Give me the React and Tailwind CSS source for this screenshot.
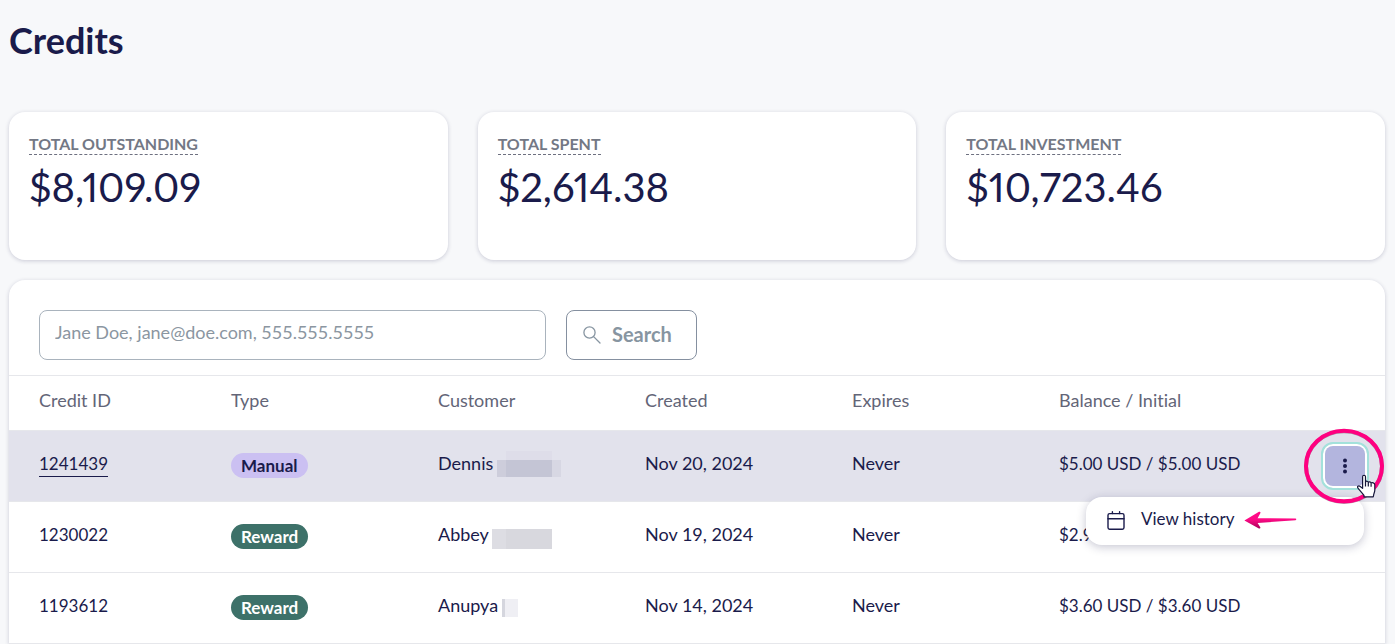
import React, { useState } from 'react';

const totals = [
    { label: 'TOTAL OUTSTANDING', amount: '$8,109.09' },
    { label: 'TOTAL SPENT', amount: '$2,614.38' },
    { label: 'TOTAL INVESTMENT', amount: '$10,723.46' },
];

const credits = [
    { id: '1241439', type: 'Manual', customer: 'Dennis', created: 'Nov 20, 2024', expires: 'Never', balance: '$5.00 USD / $5.00 USD' },
    { id: '1230022', type: 'Reward', customer: 'Abbey', created: 'Nov 19, 2024', expires: 'Never', balance: '$2.96 USD / $2.96 USD' },
    { id: '1193612', type: 'Reward', customer: 'Anupya', created: 'Nov 14, 2024', expires: 'Never', balance: '$3.60 USD / $3.60 USD' },
];

const badgeStyles = {
    Manual: 'bg-[#cbc0f2] text-[#1a1b4b]',
    Reward: 'bg-[#3d7169] text-white',
};

const SearchIcon = () => (
    <svg className="w-5 h-5" viewBox="0 0 20 20" fill="none" stroke="currentColor" strokeWidth="1.3" strokeLinecap="round">
        <circle cx="7.5" cy="7.5" r="5.6" />
        <path d="M11.6 11.6 18 18" />
    </svg>
);

const CalendarIcon = () => (
    <svg className="w-5 h-5" viewBox="0 0 20 20" fill="none" stroke="currentColor" strokeWidth="1.4" strokeLinecap="round">
        <rect x="2" y="2.6" width="16" height="15.6" rx="1.6" />
        <path d="M2 7.8h16M6.4 .7v1.9M13.6 .7v1.9" />
    </svg>
);

const DotsIcon = () => (
    <svg className="w-5 h-5" viewBox="0 0 20 20" fill="currentColor">
        <circle cx="10" cy="4.4" r="2" />
        <circle cx="10" cy="10" r="2" />
        <circle cx="10" cy="15.6" r="2" />
    </svg>
);

const ArrowMark = () => (
    <svg className="w-[54px] h-5" viewBox="0 0 54 20">
        <defs>
            <linearGradient id="arrow" x1="0" y1="0" x2="0" y2="1">
                <stop offset="0.45" stopColor="#ff0a86" />
                <stop offset="1" stopColor="#a80058" />
            </linearGradient>
        </defs>
        <path d="M.4 9.4 15 .8q2-.5 1.3 1.500L13.600 7.200 51.500 7.500q1.600.7 0 1.800L13.600 12l2.700 4.200q.4 1.700-1.400 1.200Z" fill="url(#arrow)" />
    </svg>
);

const CircleMark = () => (
    <svg className="pointer-events-none absolute z-20 -left-[22px] -top-[18px] w-[82px] h-[76px]" viewBox="0 0 82 76" fill="none">
        <ellipse cx="41" cy="38.6" rx="38" ry="35.3" stroke="#6b2a50" strokeOpacity="0.5" strokeWidth="4" />
        <ellipse cx="41" cy="38" rx="38" ry="35.3" stroke="#ff0080" strokeWidth="4" />
    </svg>
);

const HandCursor = () => (
    <svg className="pointer-events-none absolute z-20 left-8 top-7 w-5 h-6" viewBox="0 0 20 24">
        <path
            d="M5.600 2.800c0-2 2.900-2 2.900 0v5.200c.5-1.200 2.700-1 2.800.5.600-1.200 2.700-.8 2.800.7.700-1 3.700-.4 3.700 1.500v5.600c0 2-1.200 3.300-1.200 5l-.4 1.600H7v-1.600C5 19 3.200 16.800 1 14.200c-1.200-1.600.4-3 2.200-1.700l2.400 1.900Z"
            fill="#fff"
            stroke="#16163a"
            strokeWidth="1.2"
            strokeLinejoin="round"
        />
        <path d="M8.5 8v4.500M11.300 8.800v3.700M14.100 9.400v3.300" stroke="#16163a" strokeWidth="1.2" />
    </svg>
);

// Masks the surname of each customer
const NameMask = ({ customer }) => {
    if (customer === 'Dennis') {
        return (
            <span className="ml-1 flex w-16 h-[26px] items-end" aria-hidden="true">
                <span className="w-[9px] h-[17px] bg-[#cdcddb]" />
                <span className="w-[46px] h-full border-t-[9px] border-[#dedde9] bg-[#c4c5d5]" />
                <span className="w-[9px] h-[17px] bg-[#d7d7e3]" />
            </span>
        );
    }
    if (customer === 'Abbey') {
        return (
            <span className="ml-[3px] mt-2 flex w-[60px] h-5" aria-hidden="true">
                <span className="w-3.5 bg-[#dddde3]" />
                <span className="grow bg-[#d8d8de]" />
            </span>
        );
    }
    return <span className="ml-1 mt-1 w-4 h-[18px] border-l-[3px] border-[#d5d6de] bg-[#efeff4]" aria-hidden="true" />;
};

const RowActions = () => (
    <div className="relative ml-auto w-10 h-10 text-left">
        <button
            type="button"
            aria-label="Credit actions"
            className="flex w-10 h-10 items-center justify-center rounded-lg bg-[#b3b5de] text-[#1a1b4b] ring-2 ring-white outline-2 outline-offset-2 outline-[#a3e1db]"
        >
            <DotsIcon />
        </button>
        <div className="absolute z-10 right-px top-[51px] w-[278px] h-12 rounded-2xl bg-white shadow-[0_2px_10px_rgba(26,27,75,0.25)]">
            <button type="button" className="flex w-full h-full items-center pl-5 text-[17px] text-[#1a1b4b]">
                <CalendarIcon />
                <span className="ml-[15px] mr-2.5 -mt-1">View history</span>
                <ArrowMark />
            </button>
        </div>
        <CircleMark />
        <HandCursor />
    </div>
);

const App = () => {
    const [query, setQuery] = useState('');

    return (
        <div className="min-h-screen bg-[#f7f8fa] pl-[9px] pr-[10px] pt-[18px] font-['Lato',sans-serif] text-[#1a1b4b] [font-variant-ligatures:none]">
            <h1 className="text-4xl leading-11 font-bold">Credits</h1>

            <div className="mt-[50px] grid grid-cols-3 gap-[30px]">
                {totals.map((total) => (
                    <div key={total.label} className="h-[148px] rounded-2xl bg-white px-5 pt-[21px] shadow-[0_1px_4px_rgba(26,27,75,0.2)]">
                        <div className="flex">
                            <span className="border-b border-dashed border-[#6d7080] text-base leading-[21px] font-bold text-[#737885]">
                                {total.label}
                            </span>
                        </div>
                        <div className="mt-2 text-[40px] leading-12 font-normal proportional-nums">{total.amount}</div>
                    </div>
                ))}
            </div>

            <div className="mt-5 rounded-t-2xl bg-white shadow-[0_1px_4px_rgba(26,27,75,0.2)]">
                <form className="flex gap-5 px-[30px] pt-[30px] pb-[15px]" onSubmit={(e) => e.preventDefault()}>
                    <input
                        type="text"
                        aria-label="Search customers"
                        value={query}
                        onChange={(e) => setQuery(e.target.value)}
                        placeholder="Jane Doe, jane@doe.com, 555.555.5555"
                        className="w-[507px] h-[50px] rounded-lg border border-[#a9b3bd] px-[15px] pb-1.5 text-lg placeholder-[#8b96a1] focus:outline-none"
                    />
                    <button
                        type="submit"
                        className="flex w-[131px] h-[50px] items-center gap-2.5 rounded-lg border border-[#8590a0] pl-[15px] text-xl font-bold text-[#8795a1]"
                    >
                        <SearchIcon />
                        <span className="pb-0.5">Search</span>
                    </button>
                </form>

                <table className="w-full table-fixed border-t border-[#e6e7eb] text-left">
                    <thead>
                        <tr className="h-[55px] border-b border-[#e6e7eb] text-lg text-[#636577]">
                            <th className="w-[207px] pl-[30px] pb-1.5 font-normal">Credit ID</th>
                            <th className="w-[207px] pl-[15px] pb-1.5 font-normal">Type</th>
                            <th className="w-[207px] pl-[15px] pb-1.5 font-normal">Customer</th>
                            <th className="w-[207px] pl-[15px] pb-1.5 font-normal">Created</th>
                            <th className="w-[207px] pl-[15px] pb-1.5 font-normal">Expires</th>
                            <th className="w-[207px] pl-[15px] pb-1.5 font-normal">Balance / Initial</th>
                            <th aria-label="Actions" />
                        </tr>
                    </thead>
                    <tbody className="text-lg">
                        {credits.map((credit, index) => (
                            <tr
                                key={credit.id}
                                className={index === 0 ? 'h-[71px] border-b border-[#e6e7eb] bg-[#e2e2ec]' : 'h-[71px] border-b border-[#e6e7eb]'}
                            >
                                <td className="pl-[30px] pb-1 text-[17px]">
                                    <a href="#credit" className={index === 0 ? 'border-b border-[#1a1b4b] pb-0.5' : ''}>{credit.id}</a>
                                </td>
                                <td className="pl-[15px] pb-1">
                                    <span className={`inline-block h-[25px] rounded-full px-2.5 align-middle text-[17px] leading-[26px] font-bold ${badgeStyles[credit.type]}`}>
                                        {credit.type}
                                    </span>
                                </td>
                                <td className="pl-[15px] pb-1">
                                    <div className="flex h-7 items-center">
                                        <span className="pb-0.5">{credit.customer}</span>
                                        <NameMask customer={credit.customer} />
                                    </div>
                                </td>
                                <td className="pl-[15px] pb-1.5">{credit.created}</td>
                                <td className="pl-[15px] pb-1.5">{credit.expires}</td>
                                <td className="pl-[15px] pb-1 text-[17px]">{credit.balance}</td>
                                <td className="pr-5">{index === 0 && <RowActions />}</td>
                            </tr>
                        ))}
                    </tbody>
                </table>
            </div>
        </div>
    );
};

export default App;
